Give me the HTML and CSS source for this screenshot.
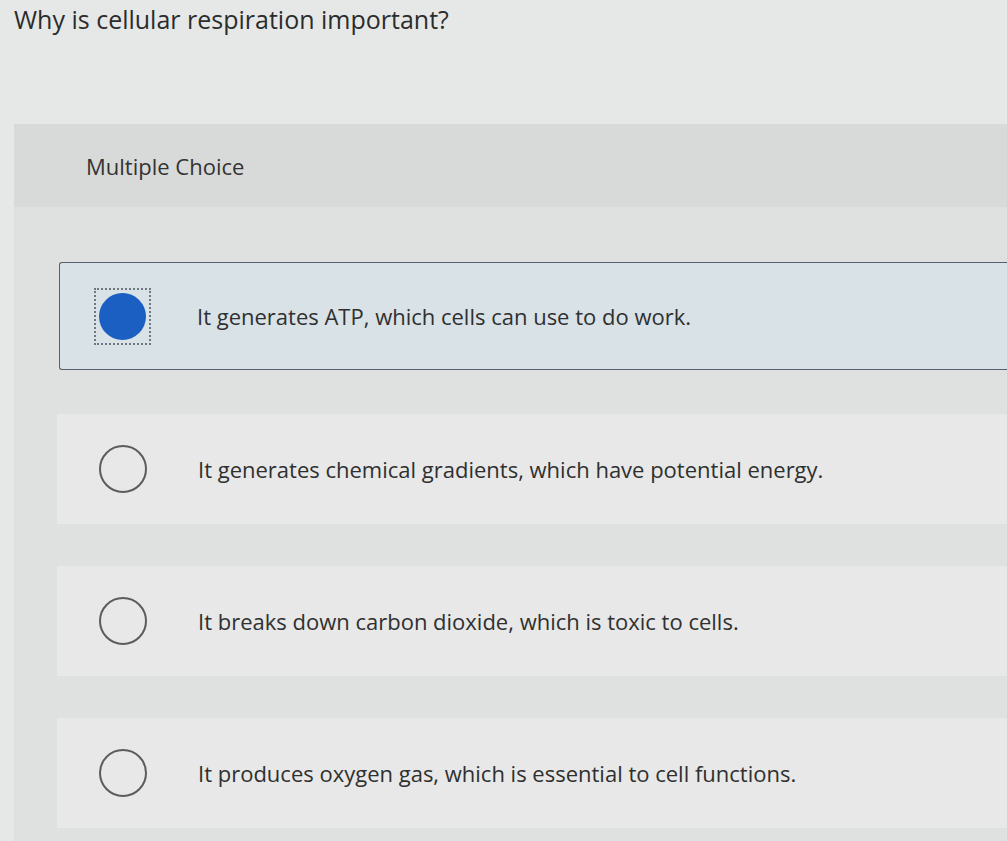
FILE: index.html
```html
<!DOCTYPE html>
<html lang="en">
<head>
<meta charset="utf-8">
<title>Multiple Choice</title>
<link rel="stylesheet" href="styles.css">
</head>
<body>
  <h1 class="question">Why is cellular respiration important?</h1>
  <section class="panel">
    <div class="panel-head">Multiple Choice</div>
    <div class="options">
      <div class="option selected">
        <span class="radio-focus"><span class="radio checked"></span></span>
        <span class="label">It generates ATP, which cells can use to do work.</span>
      </div>
      <div class="option">
        <span class="radio-wrap"><span class="radio"></span></span>
        <span class="label">It generates chemical gradients, which have potential energy.</span>
      </div>
      <div class="option">
        <span class="radio-wrap"><span class="radio"></span></span>
        <span class="label">It breaks down carbon dioxide, which is toxic to cells.</span>
      </div>
      <div class="option">
        <span class="radio-wrap"><span class="radio"></span></span>
        <span class="label">It produces oxygen gas, which is essential to cell functions.</span>
      </div>
    </div>
  </section>
</body>
</html>
```
FILE: styles.css
```css
html, body {
  margin: 0;
  padding: 0;
  height: 100%;
}
body {
  background: #e6e8e7;
  font-family: "Open Sans", Lato, "Liberation Sans", sans-serif;
  color: #2f3030;
  overflow: hidden;
}
.question {
  margin: 0;
  padding: 3px 0 0 14px;
  height: 124px;
  box-sizing: border-box;
  font-size: 25px;
  font-weight: 400;
  line-height: 32px;
  color: #2b2c2c;
}
.panel {
  margin-left: 14px;
  background: #dfe1e0;
  height: 717px;
}
.panel-head {
  height: 83px;
  background: #d8dad9;
  display: flex;
  align-items: center;
  padding-left: 72px;
  font-size: 22px;
  color: #333;
}
.options {
  padding: 55px 0 0 43px;
  display: flex;
  flex-direction: column;
  gap: 42px;
}
.option {
  height: 110px;
  box-sizing: border-box;
  background: #e7e8e7;
  display: flex;
  align-items: center;
  padding-left: 42px;
  font-size: 22px;
  color: #2f3030;
}
.option.selected {
  height: 108px;
  margin-left: 2px;
  margin-bottom: 2px;
  background: #d9e2e6;
  border: 1.5px solid #56606c;
  border-right: none;
  border-radius: 3px 0 0 3px;
  padding-left: 34px;
}
.radio-wrap {
  width: 48px;
  height: 48px;
  display: flex;
  align-items: center;
  justify-content: center;
  margin-right: 51px;
}
.radio-focus {
  width: 53px;
  height: 53px;
  border: 2px dotted #6e7680;
  display: flex;
  align-items: center;
  justify-content: center;
  margin-right: 46px;
}
.radio {
  width: 44px;
  height: 44px;
  border: 2px solid #5a5c5d;
  border-radius: 50%;
  display: block;
}
.radio.checked {
  width: 47px;
  height: 47px;
  border: none;
  background: #1c5fc2;
}
.label {
  white-space: nowrap;
}
```
